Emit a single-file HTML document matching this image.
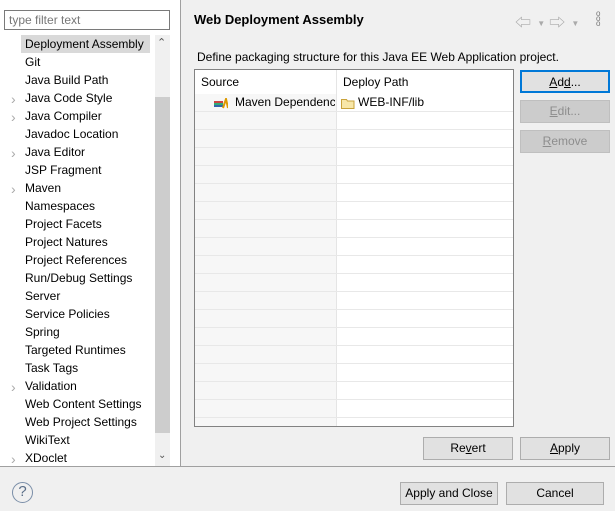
<!DOCTYPE html>
<html><head><style>
*{margin:0;padding:0;box-sizing:border-box}
body{width:615px;height:511px;background:#f0f0f0;font-family:"Liberation Sans","Noto Sans CJK KR",sans-serif;font-size:12px;color:#000;position:relative;overflow:hidden}
.a{position:absolute}
.left{left:0;top:0;width:180px;height:466px;background:#fff}
.filter{left:4px;top:10px;width:166px;height:20px;border:1px solid #7a7a7a;background:#fff;color:#777;padding:1px 4px;font-size:12px;line-height:16px}
.item{position:absolute;left:25px;height:18px;line-height:18px;white-space:nowrap}
.arr{position:absolute;left:11px;color:#aaa;font-size:14px;line-height:18px}
.btn{position:absolute;background:#e1e1e1;border:1px solid #adadad;text-align:center;line-height:21px}
.dis{color:#8d8d8d;background:#ccc;border-color:#bfbfbf}
.row{position:absolute;left:0;width:318px;height:18px;border-bottom:1px solid #e8e8e8}
</style></head><body>
<div class="a left">
<div class="a filter">type filter text</div>
<div class="a" style="left:155px;top:35px;width:15px;height:431px;background:#f0f0f0"></div>
<div class="a" style="left:155px;top:97px;width:15px;height:336px;background:#cdcdcd"></div>
<div class="a" style="left:157px;top:36px;color:#555;font-size:11px">&#8963;</div>
<div class="a" style="left:158px;top:450px;color:#555;font-size:10px">&#8964;</div>
<div class="a" style="left:21px;top:35px;width:129px;height:18px;background:#d9d9d9"></div>
<div id="tree"></div>
</div>
<div class="a" style="left:180px;top:0;width:1px;height:466px;background:#a0a0a0"></div>
<div class="a" style="left:0;top:466px;width:615px;height:1px;background:#a0a0a0"></div>
<div class="a" style="left:194px;top:12px;font-weight:bold;font-size:13px">Web Deployment Assembly</div>
<div class="a" style="left:515px;top:9px;color:#aaa;font-size:16px">&#8678;<span style="font-size:8px;vertical-align:middle;margin:0 4px"> &#9660;</span>&#8680;<span style="font-size:8px;vertical-align:middle;margin-left:4px"> &#9660;</span></div>
<div class="a" style="left:596px;top:11px;width:4px;height:16px;font-size:8px;line-height:5px;color:#777">o<br>o<br>o</div>
<div class="a" style="left:197px;top:50px">Define packaging structure for this Java EE Web Application project.</div>
<div class="a" style="left:194px;top:69px;width:320px;height:358px;border:1px solid #828282;background:#fff;overflow:hidden">
<div class="a" style="left:0;top:24px;width:142px;height:334px;background:#f7f7f7"></div>
<div class="a" style="left:141px;top:0;width:1px;height:358px;background:#e5e5e5"></div>
<div class="a" style="left:6px;top:5px">Source</div>
<div class="a" style="left:68px;top:-4px;color:#666;font-size:10px">&#8963;</div>
<div class="a" style="left:148px;top:5px">Deploy Path</div>
<div id="rows"></div>
<div class="a" style="left:19px;top:28px;width:14px;height:10px"><svg width="14" height="11"><rect x="0" y="3" width="9" height="2" fill="#c44"/><rect x="0" y="5" width="9" height="2" fill="#3a7"/><rect x="0" y="7" width="9" height="2" fill="#36a"/><path d="M9 10L12 1L14 10" stroke="#d90" fill="none" stroke-width="2"/></svg></div>
<div class="a" style="left:40px;top:25px;width:100px;overflow:hidden;white-space:nowrap">Maven Dependencies</div>
<div class="a" style="left:146px;top:28px"><svg width="14" height="11"><path d="M0.5 1.5h5l1 1.5h6.5v7.5h-12.5z" fill="#f8e7a8" stroke="#c9a33c"/></svg></div>
<div class="a" style="left:163px;top:25px">WEB-INF/lib</div>
</div>
<div class="btn" style="left:520px;top:70px;width:90px;height:23px;border:2px solid #0078d7"><u>A</u>d<u>d</u>...</div>
<div class="btn dis" style="left:520px;top:100px;width:90px;height:23px"><u>E</u>dit...</div>
<div class="btn dis" style="left:520px;top:130px;width:90px;height:23px"><u>R</u>emove</div>
<div class="btn" style="left:423px;top:437px;width:90px;height:23px">Re<u>v</u>ert</div>
<div class="btn" style="left:520px;top:437px;width:90px;height:23px"><u>A</u>pply</div>
<div class="btn" style="left:400px;top:482px;width:98px;height:23px">Apply and Close</div>
<div class="btn" style="left:506px;top:482px;width:98px;height:23px">Cancel</div>
<div class="a" style="left:12px;top:482px;width:21px;height:21px;border:1.5px solid #7a8ea8;border-radius:50%;text-align:center;line-height:18px;color:#5a6e88;font-size:15px">?</div>
<script>
var items=["Deployment Assembly","Git","Java Build Path",">Java Code Style",">Java Compiler","Javadoc Location",">Java Editor","JSP Fragment",">Maven","Namespaces","Project Facets","Project Natures","Project References","Run/Debug Settings","Server","Service Policies","Spring","Targeted Runtimes","Task Tags",">Validation","Web Content Settings","Web Project Settings","WikiText",">XDoclet"];
var h="";items.forEach(function(t,i){var y=35+i*18;if(t[0]==">"){t=t.slice(1);h+='<div class="arr" style="top:'+(y+1)+'px">&#8250;</div>';}h+='<div class="item" style="top:'+y+'px">'+t+'</div>';});
document.getElementById("tree").innerHTML=h;
var r="";for(var i=0;i<19;i++){r+='<div class="row" style="top:'+(24+i*18)+'px"></div>';}
document.getElementById("rows").innerHTML=r;
</script>
</body></html>
